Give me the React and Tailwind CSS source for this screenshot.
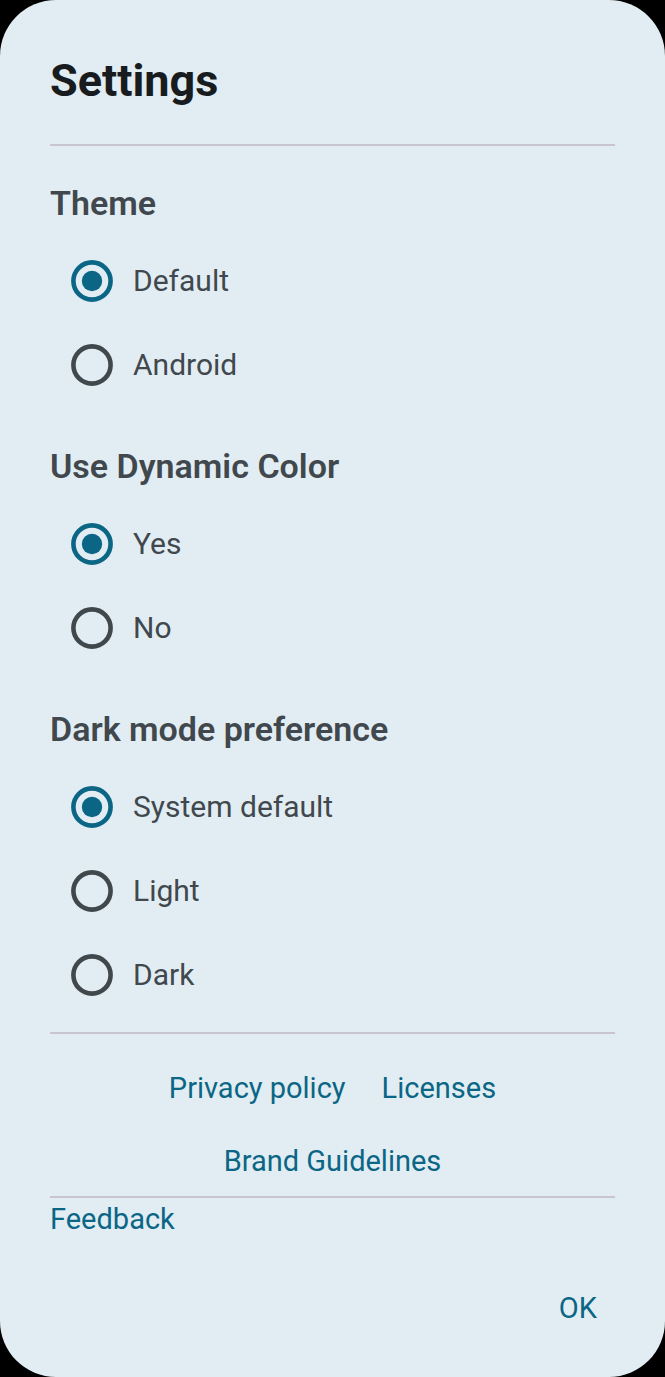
import { useState } from "react";

const Radio = ({ checked }) => (
  <svg width="42" height="42" viewBox="0 0 42 42" className="shrink-0">
    <circle
      cx="21"
      cy="21"
      r="18.6"
      fill="none"
      stroke={checked ? "#0b6685" : "#40484c"}
      strokeWidth="4.6"
    />
    {checked && <circle cx="21" cy="21" r="10.2" fill="#0b6685" />}
  </svg>
);

const Section = ({ title, options, value, onChange, className }) => (
  <div className={className}>
    <h2 className="text-[34px] leading-[36px] font-semibold text-[#41484d]">{title}</h2>
    <div className="mt-[18px] flex flex-col">
      {options.map((opt) => (
        <label
          key={opt}
          onClick={() => onChange(opt)}
          className="flex h-[84px] items-center gap-[20px] pl-[21px] cursor-pointer"
        >
          <Radio checked={value === opt} />
          <span className="text-[30px] leading-[36px] text-[#41484d]">{opt}</span>
        </label>
      ))}
    </div>
  </div>
);

export default function App() {
  const [theme, setTheme] = useState("Default");
  const [dynamic, setDynamic] = useState("Yes");
  const [dark, setDark] = useState("System default");

  return (
    <div className="h-[1377px] w-[665px] bg-black">
      <div
        className="flex h-full flex-col rounded-[56px] bg-[#e1edf3] px-[50px]"
        style={{ fontFamily: "Roboto, 'Noto Sans', sans-serif" }}
      >
        <h1 className="pt-[55px] text-[45px] leading-[52px] font-bold text-[#181c1f]">Settings</h1>
        <div className="mt-[37px] h-[2px] bg-[#c8c5d0]" />

        <Section
          className="mt-[39px]"
          title="Theme"
          options={["Default", "Android"]}
          value={theme}
          onChange={setTheme}
        />
        <Section
          className="mt-[41px]"
          title="Use Dynamic Color"
          options={["Yes", "No"]}
          value={dynamic}
          onChange={setDynamic}
        />
        <Section
          className="mt-[41px]"
          title="Dark mode preference"
          options={["System default", "Light", "Dark"]}
          value={dark}
          onChange={setDark}
        />

        <div className="mt-[15px] h-[2px] bg-[#c8c5d0]" />

        {/* links */}
        <div className="mt-[36px] flex justify-center gap-[36px] text-[29px] leading-[36px] text-[#0b6685]">
          <span>Privacy policy</span>
          <span>Licenses</span>
        </div>
        <div className="mt-[37px] text-center text-[29px] leading-[36px] text-[#0b6685]">Brand Guidelines</div>
        <div className="mt-[17px] h-[2px] bg-[#c8c5d0]" />
        <div className="mt-[3px] text-[29px] leading-[36px] text-[#0b6685]">Feedback</div>

        <div className="mt-[53px] flex justify-end pr-[18px]">
          <button className="text-[29px] leading-[36px] text-[#0b6685]">OK</button>
        </div>
      </div>
    </div>
  );
}
